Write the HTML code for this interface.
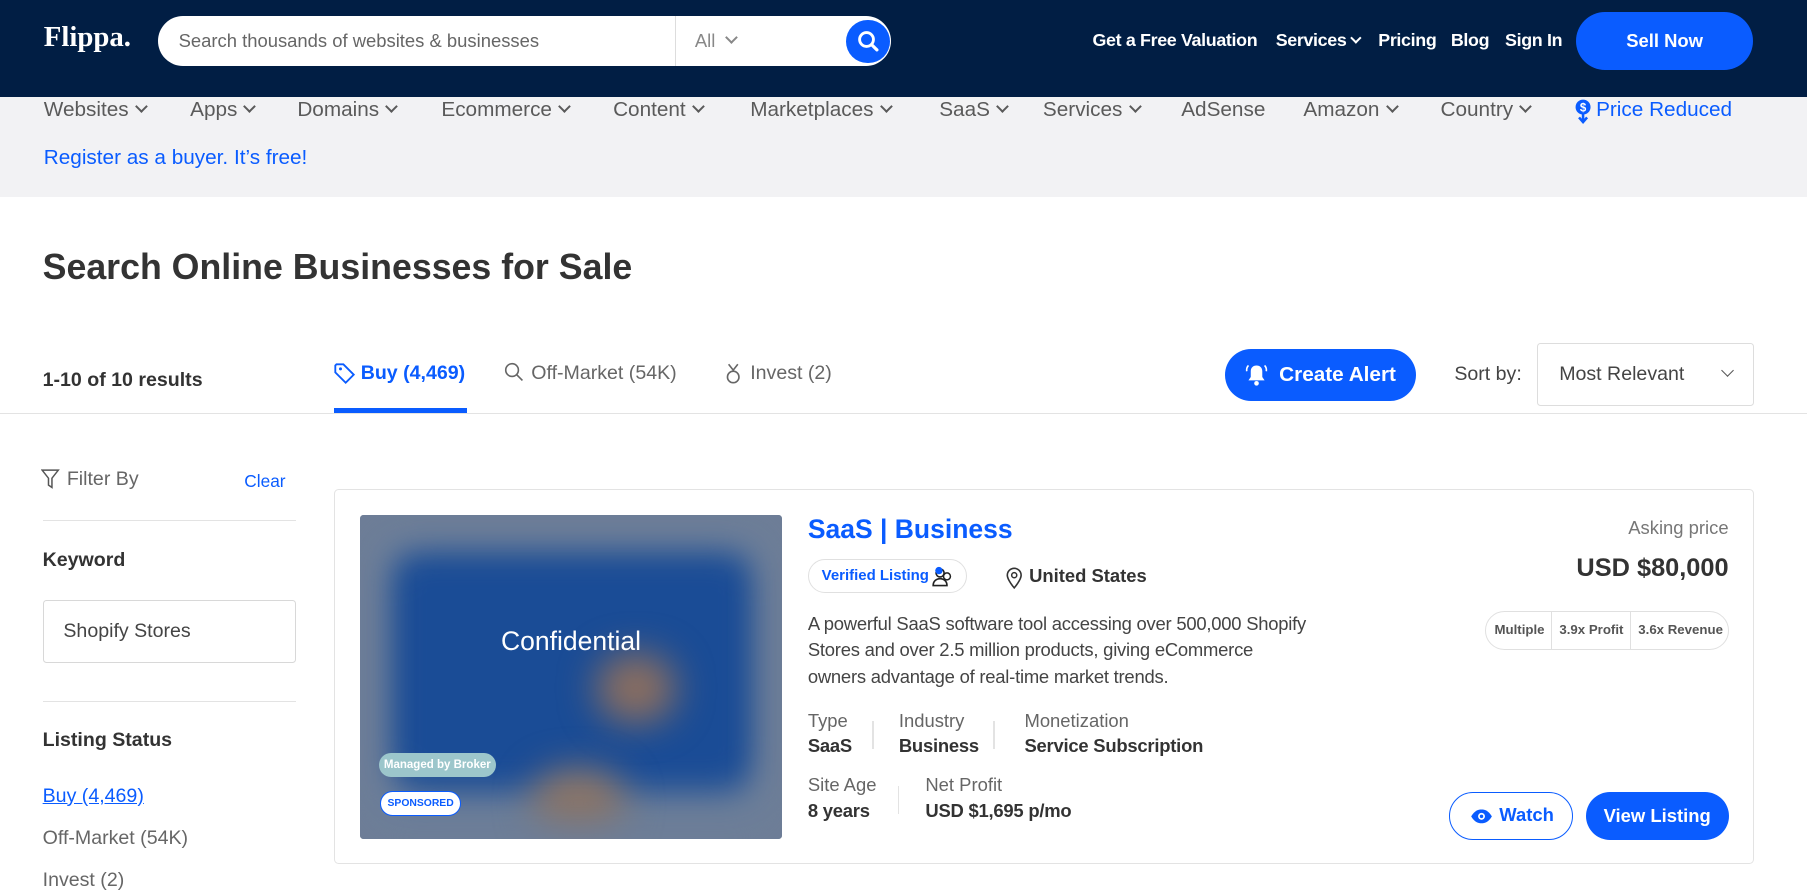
<!DOCTYPE html>
<html><head><meta charset="utf-8"><style>
html,body{margin:0;padding:0;background:#fff;overflow:hidden}
body{width:1807px;height:890px;position:relative}
#w{position:absolute;left:0;top:0;width:1568px;height:772px;zoom:1.1524;font-family:"Liberation Sans",sans-serif;color:#333}
.a{position:absolute;white-space:nowrap}
.hdr{left:0;top:0;width:1568px;height:84px;background:#011e44}
.band{left:0;top:84px;width:1568px;height:87px;background:#f2f2f4}
.nav{top:84px;font-size:18px;color:#5a5a5a;line-height:22px}
.chev{display:inline-block;width:6px;height:6px;border-right:1.8px solid currentColor;border-bottom:1.8px solid currentColor;transform:rotate(45deg);margin-left:7px;position:relative;top:-4px}
.w{color:#fff;font-weight:bold;font-size:15.5px;top:26px;letter-spacing:-0.3px}
.lbl{color:#666;font-size:16px}
.val{color:#333;font-size:16px;font-weight:bold;letter-spacing:-0.2px}
.vd{width:1px;height:24px;background:#e3e3e3}
</style></head><body><div id="w">
<div class="a hdr"></div>
<div class="a" style="left:38px;top:18px;font-family:'Liberation Serif',serif;font-weight:bold;font-size:25px;color:#fff">Flippa.</div>
<div class="a" style="left:137px;top:14px;width:636px;height:43px;background:#fff;border-radius:22px"></div>
<div class="a" style="left:155px;top:26px;font-size:16px;color:#666">Search thousands of websites &amp; businesses</div>
<div class="a" style="left:586px;top:14px;width:1px;height:43px;background:#ddd"></div>
<div class="a" style="left:603px;top:26px;font-size:16px;color:#888">All<span class="chev" style="margin-left:10px"></span></div>
<div class="a" style="left:734px;top:17px;width:38px;height:38px;border-radius:50%;background:#0a5cff"></div>
<svg class="a" style="left:742px;top:24px" width="24" height="24" viewBox="0 0 24 24"><circle cx="10" cy="10" r="6" fill="none" stroke="#fff" stroke-width="2.5"/><path d="M14.5 14.5L19 19" stroke="#fff" stroke-width="2.8" stroke-linecap="round"/></svg>
<div class="a w" style="left:948px">Get a Free Valuation</div>
<div class="a w" style="left:1107px">Services<span class="chev" style="margin-left:5px;width:5px;height:5px"></span></div>
<div class="a w" style="left:1196px">Pricing</div>
<div class="a w" style="left:1259px">Blog</div>
<div class="a w" style="left:1306px">Sign In</div>
<div class="a" style="left:1368px;top:10px;width:153px;height:51px;border-radius:26px;background:#0a5cff;color:#fff;font-weight:bold;font-size:16px;text-align:center;line-height:51px">Sell Now</div>
<div class="a band"></div>
<div class="a nav" style="left:38px">Websites<span class="chev"></span></div>
<div class="a nav" style="left:165px">Apps<span class="chev"></span></div>
<div class="a nav" style="left:258px">Domains<span class="chev"></span></div>
<div class="a nav" style="left:383px">Ecommerce<span class="chev"></span></div>
<div class="a nav" style="left:532px">Content<span class="chev"></span></div>
<div class="a nav" style="left:651px">Marketplaces<span class="chev"></span></div>
<div class="a nav" style="left:815px">SaaS<span class="chev"></span></div>
<div class="a nav" style="left:905px">Services<span class="chev"></span></div>
<div class="a nav" style="left:1025px">AdSense</div>
<div class="a nav" style="left:1131px">Amazon<span class="chev"></span></div>
<div class="a nav" style="left:1250px">Country<span class="chev"></span></div>
<svg class="a" style="left:1367px;top:86px" width="14" height="22" viewBox="0 0 14 22"><circle cx="7" cy="7" r="6.5" fill="#0a5cff"/><text x="7" y="11" font-size="10" font-weight="bold" fill="#fff" text-anchor="middle" font-family="Liberation Sans">$</text><path d="M7 13v6M3.5 16l3.5 4 3.5-4" stroke="#0a5cff" stroke-width="2.2" fill="none"/></svg>
<div class="a nav" style="left:1385px;color:#0a5cff">Price Reduced</div>
<div class="a" style="left:38px;top:127px;font-size:18px;color:#0a5cff">Register as a buyer. It’s free!</div>
<div class="a" style="left:37px;top:214px;font-size:31px;font-weight:bold;color:#333">Search Online Businesses for Sale</div>
<div class="a" style="left:37px;top:320px;font-size:17px;font-weight:bold;color:#333">1-10 of 10 results</div>
<svg class="a" style="left:289px;top:314px" width="20" height="20" viewBox="0 0 20 20"><path d="M3 2h6l9 9-7 7-9-9V3z" fill="none" stroke="#0a5cff" stroke-width="1.6"/><circle cx="6.5" cy="6" r="1.3" fill="#0a5cff"/></svg>
<div class="a" style="left:313px;top:314px;font-size:17px;color:#0a5cff;font-weight:bold">Buy (4,469)</div>
<div class="a" style="left:290px;top:354px;width:115px;height:4px;background:#0a5cff"></div>
<svg class="a" style="left:437px;top:314px" width="18" height="18" viewBox="0 0 18 18"><circle cx="7" cy="7" r="5.5" fill="none" stroke="#666" stroke-width="1.4"/><path d="M11 11l5 5" stroke="#666" stroke-width="1.4"/></svg>
<div class="a" style="left:461px;top:314px;font-size:17px;color:#666">Off-Market (54K)</div>
<svg class="a" style="left:628px;top:314px" width="16" height="20" viewBox="0 0 16 20"><circle cx="8" cy="13" r="5" fill="none" stroke="#666" stroke-width="1.4"/><path d="M4 2l4 5 4-5" fill="none" stroke="#666" stroke-width="1.4"/></svg>
<div class="a" style="left:651px;top:314px;font-size:17px;color:#666">Invest (2)</div>
<div class="a" style="left:1063px;top:303px;width:166px;height:45px;border-radius:23px;background:#0a5cff"></div>
<svg class="a" style="left:1080px;top:314px" width="20" height="22" viewBox="0 0 20 22"><path d="M10 3c-3 0-5 2-5 5v5l-2 3h14l-2-3V8c0-3-2-5-5-5z" fill="#fff"/><circle cx="10" cy="18.5" r="2" fill="#fff"/><path d="M3 3a6 6 0 0 0-1.5 5M17 3a6 6 0 0 1 1.5 5" stroke="#fff" stroke-width="1.4" fill="none"/></svg>
<div class="a" style="left:1110px;top:315px;font-size:18px;color:#fff;font-weight:bold">Create Alert</div>
<div class="a" style="left:1262px;top:315px;font-size:17px;color:#444">Sort by:</div>
<div class="a" style="left:1334px;top:298px;width:188px;height:54px;border:1px solid #ddd;border-radius:3px;box-sizing:border-box"></div>
<div class="a" style="left:1353px;top:315px;font-size:17px;color:#444">Most Relevant</div>
<div class="a" style="left:1495px;top:318px;width:7px;height:7px;border-right:1.4px solid #555;border-bottom:1.4px solid #555;transform:rotate(45deg)"></div>
<div class="a" style="left:0;top:358px;width:1568px;height:1px;background:#e3e3e3"></div>
<svg class="a" style="left:36px;top:407px" width="16" height="18" viewBox="0 0 16 18"><path d="M1 1h14l-5.5 7v8l-3-2V8z" fill="none" stroke="#555" stroke-width="1.3"/></svg>
<div class="a" style="left:58px;top:406px;font-size:17px;color:#666">Filter By</div>
<div class="a" style="left:212px;top:409px;font-size:15px;color:#0a5cff">Clear</div>
<div class="a" style="left:37px;top:451px;width:220px;height:1px;background:#e3e3e3"></div>
<div class="a" style="left:37px;top:476px;font-size:17px;font-weight:bold;color:#333">Keyword</div>
<div class="a" style="left:37px;top:521px;width:220px;height:54px;border:1px solid #d8d8d8;border-radius:3px;box-sizing:border-box"></div>
<div class="a" style="left:55px;top:538px;font-size:17px;color:#444">Shopify Stores</div>
<div class="a" style="left:37px;top:608px;width:220px;height:1px;background:#e3e3e3"></div>
<div class="a" style="left:37px;top:633px;font-size:17px;font-weight:bold;color:#333">Listing Status</div>
<div class="a" style="left:37px;top:681px;font-size:17px;color:#0a5cff;text-decoration:underline">Buy (4,469)</div>
<div class="a" style="left:37px;top:718px;font-size:17px;color:#666">Off-Market (54K)</div>
<div class="a" style="left:37px;top:754px;font-size:17px;color:#666">Invest (2)</div>
<div class="a" style="left:290px;top:424px;width:1232px;height:326px;border:1px solid #e3e3e3;border-radius:4px;box-sizing:border-box"></div>
<div class="a" style="left:312px;top:447px;width:367px;height:281px;border-radius:3px;overflow:hidden;background:#6c7f9a">
<div class="a" style="left:25px;top:30px;width:320px;height:210px;border-radius:30px;background:#1a4c96;filter:blur(14px)"></div>
<div class="a" style="left:205px;top:120px;width:70px;height:60px;border-radius:30px;background:#8a6e60;filter:blur(16px)"></div>
<div class="a" style="left:150px;top:220px;width:80px;height:60px;border-radius:30px;background:#8a7568;filter:blur(16px)"></div>
<div class="a" style="left:0;top:0;width:367px;height:281px;box-shadow:inset 0 0 30px 14px rgba(110,125,150,.8)"></div>
</div>
<div class="a" style="left:312px;top:543px;width:367px;text-align:center;font-size:23px;color:#fff">Confidential</div>
<div class="a" style="left:329px;top:653px;width:101px;height:21px;border-radius:11px;background:#9cc6cb;color:#fff;font-size:10px;font-weight:bold;text-align:center;line-height:21px">Managed by Broker</div>
<div class="a" style="left:330px;top:686px;width:70px;height:22px;border-radius:11px;background:#fff;border:1px solid #0a5cff;box-sizing:border-box;color:#0a5cff;font-size:9px;font-weight:bold;text-align:center;line-height:20px">SPONSORED</div>
<div class="a" style="left:701px;top:446px;font-size:23px;font-weight:bold;color:#0a5cff">SaaS | Business</div>
<div class="a" style="left:701px;top:485px;width:138px;height:30px;border:1px solid #e0e0e0;border-radius:15px;box-sizing:border-box"></div>
<div class="a" style="left:713px;top:492px;font-size:13px;color:#0a5cff;font-weight:bold">Verified Listing</div>
<svg class="a" style="left:809px;top:491px" width="20" height="18" viewBox="0 0 20 18"><circle cx="7" cy="6" r="3.5" fill="none" stroke="#222" stroke-width="1.4"/><path d="M1 17c0-4 3-6 6-6s6 2 6 6z" fill="none" stroke="#222" stroke-width="1.4"/><circle cx="13" cy="9" r="3" fill="none" stroke="#222" stroke-width="1.3"/><circle cx="6" cy="4" r="3.2" fill="#0a5cff"/></svg>
<svg class="a" style="left:872px;top:491px" width="16" height="20" viewBox="0 0 16 20"><path d="M8 19s-6-7-6-11a6 6 0 0 1 12 0c0 4-6 11-6 11z" fill="none" stroke="#333" stroke-width="1.4"/><circle cx="8" cy="8" r="2.2" fill="none" stroke="#333" stroke-width="1.3"/></svg>
<div class="a" style="left:893px;top:490px;font-size:16px;font-weight:bold;color:#333">United States</div>
<div class="a" style="left:701px;top:530px;font-size:16px;color:#444;line-height:23px;white-space:normal;width:440px;letter-spacing:-0.2px">A powerful SaaS software tool accessing over 500,000 Shopify Stores and over 2.5 million products, giving eCommerce owners advantage of real-time market trends.</div>
<div class="a lbl" style="left:701px;top:616px">Type</div><div class="a val" style="left:701px;top:638px">SaaS</div>
<div class="a vd" style="left:757px;top:626px"></div>
<div class="a lbl" style="left:780px;top:616px">Industry</div><div class="a val" style="left:780px;top:638px">Business</div>
<div class="a vd" style="left:862px;top:626px"></div>
<div class="a lbl" style="left:889px;top:616px">Monetization</div><div class="a val" style="left:889px;top:638px">Service Subscription</div>
<div class="a lbl" style="left:701px;top:672px">Site Age</div><div class="a val" style="left:701px;top:694px">8 years</div>
<div class="a vd" style="left:779px;top:682px"></div>
<div class="a lbl" style="left:803px;top:672px">Net Profit</div><div class="a val" style="left:803px;top:694px">USD $1,695 p/mo</div>
<div class="a" style="left:1300px;top:449px;width:200px;text-align:right;font-size:16px;color:#777">Asking price</div>
<div class="a" style="left:1250px;top:481px;width:250px;text-align:right;font-size:22px;font-weight:bold;color:#333">USD $80,000</div>
<div class="a" style="left:1289px;top:530px;width:211px;height:34px;border:1px solid #e0e0e0;border-radius:17px;box-sizing:border-box;font-size:11.5px;color:#555;font-weight:bold;display:flex;align-items:center">
<span style="padding:0 6px 0 7px;border-right:1px solid #e0e0e0;line-height:32px">Multiple</span><span style="padding:0 6px;border-right:1px solid #e0e0e0;line-height:32px">3.9x Profit</span><span style="padding:0 6px;line-height:32px">3.6x Revenue</span></div>
<div class="a" style="left:1257px;top:687px;width:108px;height:42px;border:1px solid #0a5cff;border-radius:21px;box-sizing:border-box"></div>
<svg class="a" style="left:1276px;top:699px" width="20" height="18" viewBox="0 0 20 18"><path d="M1 9c3-5 6-6 9-6s6 1 9 6c-3 5-6 6-9 6s-6-1-9-6z" fill="#0a5cff"/><circle cx="10" cy="9" r="3" fill="#fff"/><circle cx="10" cy="9" r="1.5" fill="#0a5cff"/></svg>
<div class="a" style="left:1301px;top:698px;font-size:16px;color:#0a5cff;font-weight:bold">Watch</div>
<div class="a" style="left:1376px;top:687px;width:124px;height:42px;border-radius:21px;background:#0a5cff;color:#fff;font-size:16px;font-weight:bold;text-align:center;line-height:42px">View Listing</div>
</div></body></html>
